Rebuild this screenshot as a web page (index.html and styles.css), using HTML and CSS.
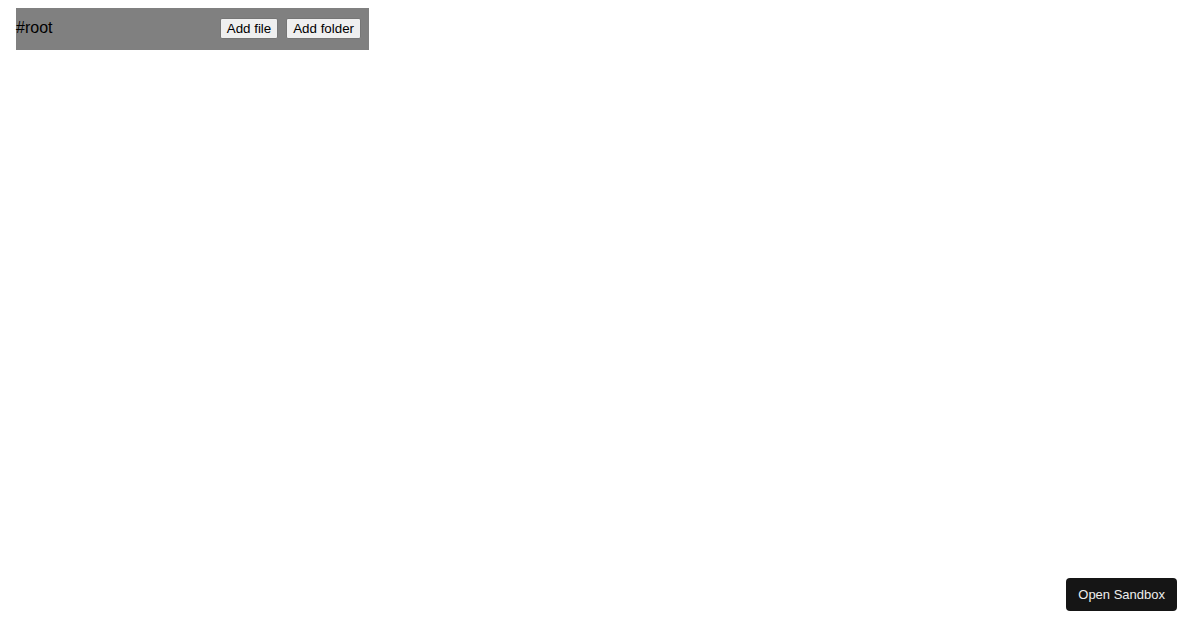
FILE: index.html
```html
<!DOCTYPE html>
<html>
<head>
<meta charset="utf-8">
<link rel="stylesheet" href="styles.css">
</head>
<body>
<div class="tree">
  <div class="node">
    <span class="node-name">#root</span>
    <div class="actions">
      <button class="btn">Add file</button>
      <button class="btn">Add folder</button>
    </div>
  </div>
</div>
<a class="sandbox">Open Sandbox</a>
</body>
</html>
```
FILE: styles.css
```css
html, body {
  background: #ffffff;
}
body {
  margin: 8px;
  font-family: "Liberation Sans", Arial, sans-serif;
  font-size: 16px;
}
.tree {
  padding-left: 8px;
}
.node {
  width: 345px;
  height: 42px;
  padding-right: 8px;
  background: #808080;
  display: flex;
  align-items: center;
  justify-content: space-between;
}
.node-name {
  color: #000;
  line-height: 18px;
  margin-bottom: 3px;
}
.actions {
  display: flex;
  gap: 8px;
  margin-bottom: 1px;
}
.btn {
  font-family: "Liberation Sans", Arial, sans-serif;
  font-size: 13.333px;
  height: 21px;
  padding: 1px 6px;
  background: #efefef;
  color: #000;
  border: 1px solid #767676;
  border-radius: 2px;
}
.sandbox {
  position: fixed;
  right: 23px;
  bottom: 19px;
  height: 33px;
  padding: 0 12px;
  display: flex;
  align-items: center;
  background: #151515;
  color: #eeeeee;
  border-radius: 4px;
  font-family: "Liberation Sans", Arial, sans-serif;
  font-size: 13px;
}
```
